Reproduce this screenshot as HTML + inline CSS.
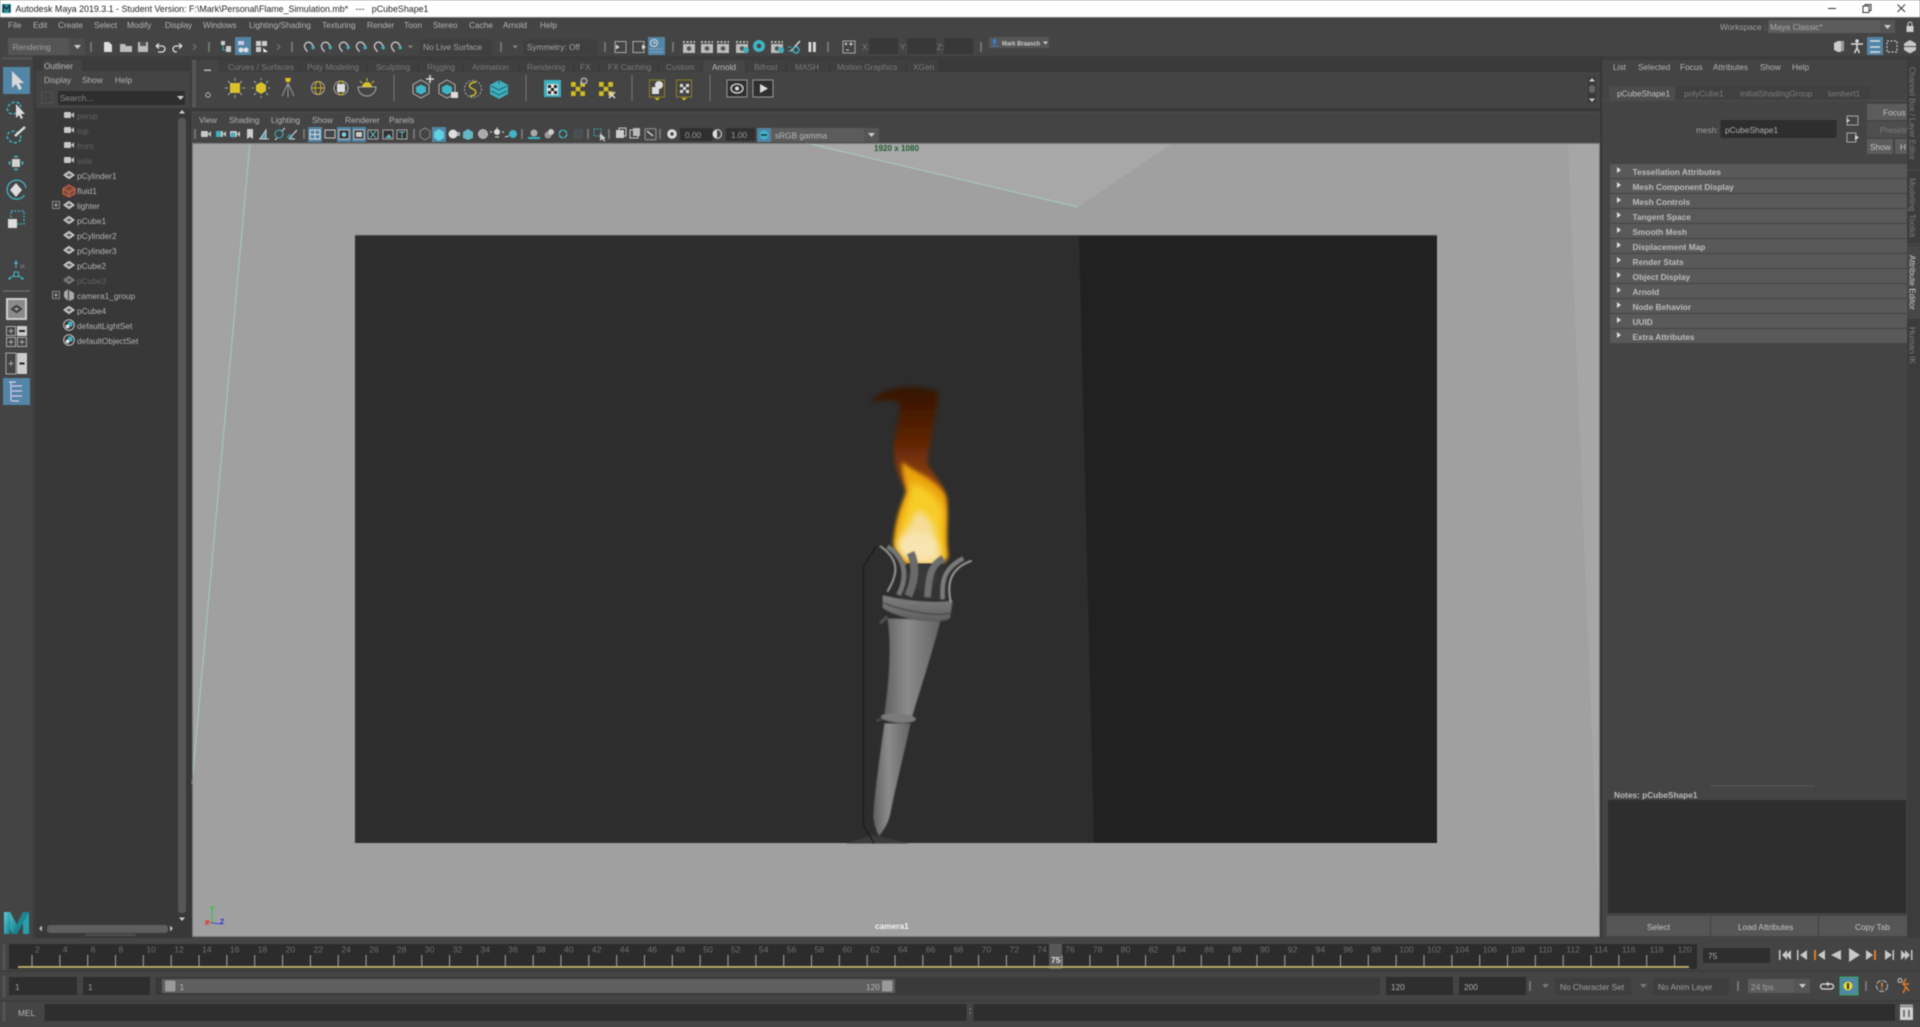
<!DOCTYPE html>
<html><head><meta charset="utf-8"><title>Autodesk Maya 2019.3.1</title>
<style>
html,body{margin:0;padding:0;background:#444;width:1920px;height:1027px;overflow:hidden}
svg{display:block;filter:blur(.45px)}
text{font-family:"Liberation Sans",sans-serif;font-size:8.3px;fill:#b4b4b4}
.d{fill:#7c7c7c}.dd{fill:#626262}.b{font-weight:bold;fill:#bcbcbc}.w{fill:#e4e4e4}
.k{font-size:8.6px;fill:#6f6f6f}
.v{font-size:8.4px;fill:#8a8a8a}
</style></head><body>
<svg xmlns="http://www.w3.org/2000/svg" width="1920" height="1027" viewBox="0 0 1920 1027">
<defs>
<g id="cam"><rect x="-5" y="-3" width="7" height="6" rx="1" fill="#c8c8c8"/><path d="M2 0L5-3V3Z" fill="#c8c8c8"/></g>
<g id="obj"><path d="M-6 0L-3-2.2L0-4.2L3-2.2L6 0L3 2.2L0 4.2L-3 2.2Z" fill="#c4c4c4"/><path d="M-2.5 0H2.5M0-2V2" stroke="#444" stroke-width=".9"/></g>
<g id="set"><circle r="5.3" fill="#333" stroke="#c4c4c4"/><rect x="-1" y="-3.5" width="4.5" height="5" fill="#3fb0bf"/><circle cx="-1.5" cy="1.5" r="2" fill="#ddd"/></g>
<g id="plus"><rect x="-3.5" y="-3.5" width="7" height="7" fill="none" stroke="#8a8a8a"/><path d="M-2 0H2M0-2V2" stroke="#aaa"/></g>
<g id="pane"><rect x="-4.5" y="-4.5" width="9" height="9" fill="none" stroke="#aaa"/><path d="M-2.500 0H2.500M0-2.500V2.500" stroke="#aaa"/></g>
<g id="mag"><path d="M-4 3V-1A4 4 0 0 1 4-1V3" fill="none" stroke="#c8c8c8" stroke-width="1.400"/><rect x="1.500" y="1.500" width="3" height="3" fill="#3fb0bf"/></g>
<g id="clap"><rect x="-6" y="-3" width="12" height="9" fill="#bdbdbd"/><path d="M-6-5H6" stroke="#bdbdbd" stroke-dasharray="2 1.5" stroke-width="2"/><circle cy="1.5" r="2.3" fill="#555"/></g>
<g id="vb"><rect x="-6" y="-6" width="12" height="12" rx="1" fill="none" stroke="#9a9a9a" stroke-width="1.1"/></g>
<g id="bar"><rect x="-.8" y="-5" width="1.6" height="10" fill="#7d7d7d"/></g>
<g id="hex"><path d="M0-9L8-4.5V4.5L0 9L-8 4.5V-4.5Z" fill="none" stroke="#b4b4b4"/><path d="M0-4.5L5-2V3L0 5.5L-5 3V-2Z" fill="#3fb5c6"/></g>
<g id="chk"><path d="M-7-7h4.7v4.7H-7zM2.300-7H7v4.700H2.300zM-2.300-2.300H2.300V2.300H-2.300zM-7 2.300h4.700V7H-7zM2.300 2.300H7V7H2.300z" fill="#d0bd1e"/></g>
<g id="bulb"><circle r="6.500" fill="none" stroke="#aaa"/><ellipse rx="3" ry="6.500" fill="none" stroke="#c9b21f"/><path d="M-6.500 0H6.500" stroke="#c9b21f"/></g>
<filter id="b2" x="-30%" y="-30%" width="160%" height="160%"><feGaussianBlur stdDeviation="6"/></filter>
<filter id="b3" x="-30%" y="-30%" width="160%" height="160%"><feGaussianBlur stdDeviation="10"/></filter>
<filter id="b1" x="-20%" y="-20%" width="140%" height="140%"><feGaussianBlur stdDeviation="1.500"/></filter>
<linearGradient id="fl" x1="0" y1="0" x2="0" y2="1"><stop offset="0" stop-color="#331204"/><stop offset=".3" stop-color="#5e2406"/><stop offset=".55" stop-color="#94460a"/><stop offset=".7" stop-color="#e08a0e"/><stop offset="1" stop-color="#f0a612"/></linearGradient>
<linearGradient id="h1" x1="0" y1="0" x2="1" y2="0"><stop offset="0" stop-color="#606060"/><stop offset=".4" stop-color="#8c8c8c"/><stop offset="1" stop-color="#636363"/></linearGradient>
<linearGradient id="h2" x1="0" y1="0" x2="0" y2="1"><stop offset="0" stop-color="#808080"/><stop offset="1" stop-color="#606060"/></linearGradient>
<linearGradient id="mlogo" x1="0" y1="0" x2="1" y2="1"><stop offset="0" stop-color="#5fd0dc"/><stop offset="1" stop-color="#157f8c"/></linearGradient>
</defs>

<!-- base -->
<rect width="1920" height="1027" fill="#444"/>
<!-- title bar -->
<rect width="1920" height="17" fill="#fff"/>
<rect y="16.500" width="1920" height="1" fill="#ccc"/>
<rect x="2" y="4" width="9" height="9" fill="#2d8d96"/><path d="M3.500 12V5.500L6.500 9L9.500 5.500V12" fill="none" stroke="#123" stroke-width="1"/>
<text x="15.500" y="12" style="font-size:9.200px;fill:#222" textLength="413" lengthAdjust="spacingAndGlyphs" xml:space="preserve">Autodesk Maya 2019.3.1 - Student Version: F:\Mark\Personal\Flame_Simulation.mb*   ---   pCubeShape1</text>
<path d="M1828 8.500H1836" stroke="#333"/><rect x="1863" y="6" width="6" height="6.500" fill="none" stroke="#333"/><path d="M1865 6V4.500H1871V10.500H1869" fill="none" stroke="#333"/><path d="M1897.500 4.500L1905 12M1905 4.500L1897.500 12" stroke="#333"/>

<!-- menu -->
<text x="8" y="28">File</text><text x="33" y="28">Edit</text><text x="58" y="28">Create</text><text x="94" y="28">Select</text><text x="127" y="28">Modify</text><text x="165" y="28">Display</text><text x="203" y="28">Windows</text><text x="249" y="28">Lighting/Shading</text><text x="322" y="28">Texturing</text><text x="367" y="28">Render</text><text x="404" y="28">Toon</text><text x="433" y="28">Stereo</text><text x="469" y="28">Cache</text><text x="503" y="28">Arnold</text><text x="540" y="28">Help</text>

<text x="1720" y="30" class="v" style="fill:#a0a0a0">Workspace :</text>
<rect x="1768" y="20" width="127" height="13" fill="#5c5c5c"/><rect x="1880" y="20" width="15" height="13" fill="#555"/>
<text x="1770" y="30" style="fill:#acacac">Maya Classic*</text><path d="M1884 25H1891L1887.500 29Z" fill="#ccc"/>
<rect x="1906.500" y="26" width="7" height="6" fill="#d0d0d0"/><path d="M1908 26V24A2 2 0 0 1 1912 24V26" fill="none" stroke="#d0d0d0"/>

<!-- status line -->
<rect x="8" y="38" width="77" height="17" fill="#555"/><rect x="69" y="38" width="16" height="17" fill="#4c4c4c"/>
<text x="12.500" y="50" style="fill:#a0a0a0">Rendering</text><path d="M74 45H81L77.500 49Z" fill="#ccc"/>
<use href="#bar" x="91" y="47"/>
<path d="M104 42H109L112 45V52H104Z" fill="#ddd"/>
<path d="M120 44H125L126 46H132V52H120Z" fill="#bdbdbd"/>
<rect x="138" y="42" width="10" height="10" fill="#bbb"/><rect x="140" y="42" width="6" height="4" fill="#555"/>
<path d="M156 46H162A3 3 0 0 1 162 52H158M156 46L159 43.500M156 46L159 48.500" fill="none" stroke="#ddd" stroke-width="1.300"/>
<path d="M182 46H176A3 3 0 0 0 176 52H177M182 46L179 43.500M182 46L179 48.500" fill="none" stroke="#ddd" stroke-width="1.300"/>
<path d="M193 44L196 47L193 50" fill="none" stroke="#777"/><use href="#bar" x="209" y="47"/>
<path d="M221 41h4v4h-4zM226 46h5v6h-5z" fill="#ccc"/><path d="M223 45V50H226" stroke="#3fb0bf" fill="none"/>
<rect x="235" y="37" width="16" height="18" fill="#5285a6"/><path d="M238 41h6v4h-6z" fill="#ccd"/><circle cx="241" cy="50" r="2.500" fill="#ddd"/><circle cx="246" cy="50" r="2.500" fill="#ddd"/>
<path d="M256 41h5v5h-5zM262 41h5v5h-5zM256 47h5v5h-5z" fill="#ccc"/><path d="M263 48L268 52H264V54Z" fill="#fff"/>
<path d="M277 44L280 47L277 50" fill="none" stroke="#777"/><use href="#bar" x="292" y="47"/>
<use href="#mag" x="309" y="47" transform="rotate(-35 309 47)"/><use href="#mag" x="326" y="47" transform="rotate(-35 326 47)"/><use href="#mag" x="344" y="47" transform="rotate(-35 344 47)"/><use href="#mag" x="361" y="47" transform="rotate(-35 361 47)"/><use href="#mag" x="379" y="47" transform="rotate(-35 379 47)"/><use href="#mag" x="396" y="47" transform="rotate(-35 396 47)"/>
<path d="M408 45.500H413L410.500 48.500Z" fill="#888"/>
<rect x="420" y="39" width="72" height="16" fill="#3f3f3f"/><text x="423" y="50" style="fill:#a4a4a4">No Live Surface</text>
<use href="#bar" x="501" y="47"/><path d="M512.500 45.500H518L515.200 48.500Z" fill="#888"/>
<rect x="523" y="39" width="74" height="16" fill="#3f3f3f"/><text x="527" y="50" style="fill:#a4a4a4">Symmetry: Off</text>
<use href="#bar" x="605" y="47"/>
<rect x="615" y="41.500" width="11" height="11" fill="none" stroke="#aaa"/><path d="M616 44.500L619.500 47L616 49.500Z" fill="#ddd"/>
<rect x="633" y="41.500" width="11" height="11" fill="none" stroke="#aaa"/><path d="M642 44.500L646 47L642 49.500Z" fill="#ddd"/>
<rect x="648" y="37" width="17" height="18" fill="#5285a6"/><circle cx="654" cy="43" r="3.500" fill="none" stroke="#ddd"/><path d="M654 41V43H656" stroke="#ddd" fill="none"/><path d="M650 49h13M650 52h13" stroke="#8fb4cc" stroke-dasharray="2 1"/>
<use href="#bar" x="673" y="47"/>
<use href="#clap" x="689" y="47"/><use href="#clap" x="707" y="47"/><use href="#clap" x="723" y="47"/>
<use href="#clap" x="742" y="47"/><circle cx="746" cy="50" r="3" fill="#3fb0bf"/>
<circle cx="759" cy="46" r="6" fill="#3fb5c6"/><circle cx="759" cy="46" r="2.300" fill="#444"/>
<use href="#clap" x="777" y="47"/><circle cx="781" cy="50" r="3" fill="#3fb0bf"/>
<path d="M791 51L800 41" stroke="#ddd" stroke-width="1.500"/><circle cx="796" cy="50" r="3" fill="none" stroke="#3fb0bf" stroke-width="1.500"/><path d="M788 47h3M788 51h3" stroke="#3fb0bf"/>
<rect x="808.500" y="42" width="2.800" height="10" fill="#ddd"/><rect x="813" y="42" width="2.800" height="10" fill="#ddd"/>
<use href="#bar" x="828" y="47"/>
<rect x="843" y="41" width="12" height="12" fill="none" stroke="#aaa"/><circle cx="846" cy="44" r="1.200" fill="#ccc"/><path d="M849 44h4M851 42v4M846 50h3" stroke="#ccc" fill="none"/>
<text x="862" y="50" class="d">X:</text><rect x="869" y="38" width="29" height="16" fill="#383838"/>
<text x="900" y="50" class="d">Y:</text><rect x="907" y="38" width="29" height="16" fill="#383838"/>
<text x="937" y="50" class="d">Z:</text><rect x="944" y="38" width="29" height="16" fill="#383838"/>
<use href="#bar" x="981" y="47"/>
<rect x="989" y="37" width="60" height="11" fill="#565656"/><rect x="993" y="39" width="3" height="5" fill="#3a7fd8"/><path d="M991 46h7" stroke="#3a7fd8"/><text x="1002" y="45.500" style="font-size:6.500px;font-weight:bold;fill:#ccc" textLength="38" lengthAdjust="spacingAndGlyphs">Mark Braasch</text><path d="M1043 41.500H1048L1045.500 44.500Z" fill="#ccc"/>

<path d="M1834 43l4-2h3v11h-3l-4-2z" fill="#ccc"/><path d="M1841 41h3v10h-3z" fill="#999"/>
<circle cx="1857" cy="41" r="1.800" fill="#ddd"/><path d="M1851 44H1863M1857 43V48L1854.500 53M1857 48L1859.500 53" stroke="#ddd" stroke-width="1.500" fill="none"/>
<rect x="1867" y="37" width="16" height="18" fill="#5285a6"/><path d="M1870 41h10M1870 47h10M1870 52h10" stroke="#ddd" stroke-width="1.600"/>
<rect x="1887" y="41" width="10" height="11" fill="none" stroke="#ddd" stroke-dasharray="2 1.500"/>
<path d="M1910 40L1916 43.500V50L1910 53.500L1904 50V43.500Z" fill="#c9c9c9"/><path d="M1904 46.500h12" stroke="#555"/>

<!-- dark divider under status -->
<rect y="56" width="1920" height="4" fill="#3c3c3c"/>

<!-- toolbox -->
<rect x="0" y="56" width="33" height="884" fill="#444"/>
<path d="M2 58.500H31" stroke="#666" stroke-dasharray="1 1" stroke-width="2"/>
<rect x="3" y="67" width="27" height="27" fill="#5285a6"/><path d="M12 71V88L16 84L19 90L22 88.500L19 83H24Z" fill="#d8d8d8"/>
<ellipse cx="14" cy="108" rx="7" ry="5.500" fill="none" stroke="#3fb5c6" stroke-width="1.500" stroke-dasharray="3 2" transform="rotate(-30 14 108)"/><path d="M16 104V118L19 115L21 119L23 118L21 114H25Z" fill="#ddd"/>
<ellipse cx="14" cy="137" rx="7" ry="5.500" fill="none" stroke="#3fb5c6" stroke-width="1.500" stroke-dasharray="3 2" transform="rotate(20 14 137)"/><path d="M15 136L25 127" stroke="#ddd" stroke-width="2.500"/>
<rect x="12" y="159" width="8" height="8" fill="#d0d0d0"/><path d="M16 155L13.500 157.500H18.500ZM16 171L13.500 168.500H18.500ZM8 163L10.500 160.500V165.500ZM24 163L21.500 160.500V165.500Z" fill="#3fb5c6"/>
<path d="M26 188A9.500 9.500 0 1 0 24.500 195" fill="none" stroke="#3fb5c6" stroke-width="1.300"/><path d="M16 183L22 190L16 197L10 190Z" fill="#ddd"/>
<rect x="11" y="211" width="13" height="13" fill="none" stroke="#3fb5c6" stroke-dasharray="2 1.500" stroke-width="1.200"/><rect x="8" y="219" width="9" height="9" fill="#ddd"/>
<path d="M16 268L16 262M9.500 279L14 275M22.500 279L18 275" stroke="#3fb5c6"/><rect x="14" y="272" width="4.500" height="4.500" fill="none" stroke="#3fb5c6"/><path d="M16 260L14 264H18ZM8 280L11 279L9.500 276.500ZM24 280L21 279L22.500 276.500Z" fill="#3fb5c6"/><text x="20" y="268" style="font-size:5.500px;fill:#999">st.</text>
<rect x="3" y="290.500" width="27" height="1" fill="#777"/>
<rect x="7" y="299" width="19" height="20" fill="#8a8a8a" stroke="#cfcfcf" stroke-width="2"/><use href="#obj" x="16.500" y="309" style="filter:invert(1)"/>
<use href="#pane" x="11" y="331"/><rect x="17" y="326" width="10" height="10" fill="#ccc"/><path d="M19 331H25" stroke="#222" stroke-width="2"/><use href="#pane" x="11" y="342"/><use href="#pane" x="22" y="342"/>
<rect x="6" y="353" width="10" height="21" fill="#444" stroke="#aaa"/><path d="M8.500 363.500H13.500M11 361V366" stroke="#aaa"/><rect x="17" y="353" width="10" height="21" fill="#ccc"/><path d="M19.500 363.500H24.500" stroke="#222" stroke-width="2"/>
<rect x="3" y="378" width="27" height="27" fill="#5285a6"/><path d="M9 382h7M12 386h10M12 391h10M12 396h10M12 401h7M11 382V401" stroke="#dce" stroke-width="1.200" fill="none"/>
<path d="M4 912H10L17 925L17 934H12L5 918Z" fill="url(#mlogo)"/><rect x="4" y="912" width="6" height="22" fill="url(#mlogo)"/><rect x="23" y="912" width="6" height="22" fill="#27a0ad"/><path d="M23 912H29L17 934H12Z" fill="#1c8593"/>

<!-- outliner -->
<rect x="33" y="60" width="159" height="880" fill="#3b3b3b"/>
<rect x="43" y="60" width="39" height="11" fill="#444"/><text x="44" y="69" style="fill:#bcbcbc">Outliner</text>
<rect x="36" y="71" width="154" height="37" fill="#444"/>
<text x="44" y="83">Display</text><text x="82" y="83">Show</text><text x="115" y="83">Help</text>
<rect x="41.500" y="92" width="11" height="11" fill="none" stroke="#5c5c5c" stroke-dasharray="2 2"/>
<rect x="58" y="91" width="127" height="14" fill="#2e2e2e"/><text x="60" y="101" style="fill:#8a8a8a">Search...</text><path d="M177 96H184L180.500 100Z" fill="#ccc"/>
<rect x="36" y="108" width="154" height="832" fill="#383838"/>
<use href="#cam" x="69" y="115"/><text x="77" y="119" class="dd">persp</text>
<use href="#cam" x="69" y="130"/><text x="77" y="134" class="dd">top</text>
<use href="#cam" x="69" y="145"/><text x="77" y="149" class="dd">front</text>
<use href="#cam" x="69" y="160"/><text x="77" y="164" class="dd">side</text>
<use href="#obj" x="69" y="175"/><text x="77" y="179">pCylinder1</text>
<path d="M69 185L75 188.500V194L69 197L63 194V188.500Z" fill="#7b4a3c" stroke="#d8664c"/><path d="M63 188.500L69 192L75 188.500M69 192V197" stroke="#d8664c" fill="none"/><text x="77" y="194">fluid1</text>
<use href="#plus" x="56" y="205"/><use href="#obj" x="69" y="205"/><text x="77" y="209">lighter</text>
<use href="#obj" x="69" y="220"/><text x="77" y="224">pCube1</text>
<use href="#obj" x="69" y="235"/><text x="77" y="239">pCylinder2</text>
<use href="#obj" x="69" y="250"/><text x="77" y="254">pCylinder3</text>
<use href="#obj" x="69" y="265"/><text x="77" y="269">pCube2</text>
<use href="#obj" x="69" y="280" opacity=".5"/><text x="77" y="284" class="dd">pCube3</text>
<use href="#plus" x="56" y="295"/><path d="M64 297V292L68 289V301ZM69 290L74 293V299L69 301Z" fill="#aaa"/><text x="77" y="299">camera1_group</text>
<use href="#obj" x="69" y="310"/><text x="77" y="314">pCube4</text>
<use href="#set" x="69" y="325"/><text x="77" y="329">defaultLightSet</text>
<use href="#set" x="69" y="340"/><text x="77" y="344">defaultObjectSet</text>
<!-- outliner scrollbars -->
<path d="M182 110L185 113.500H179Z" fill="#ccc"/><rect x="178" y="118" width="8" height="795" rx="3" fill="#565656"/><path d="M182 921L185 917.500H179Z" fill="#ccc"/>
<path d="M39 928.500L42 925.500V931.500Z" fill="#bbb"/><rect x="47" y="925" width="121" height="8" rx="3" fill="#5e5e5e"/><path d="M173 928.500L170 925.500V931.500Z" fill="#bbb"/>
<path d="M86 935H136" stroke="#666" stroke-dasharray="1 1" stroke-width="2"/>

<!-- shelf -->
<path d="M194 60V107" stroke="#666" stroke-width="4" stroke-dasharray="1 1"/>
<rect x="199" y="60" width="1401" height="48" fill="#444"/>
<rect x="204" y="69.500" width="7" height="1.500" fill="#bbb"/><circle cx="208" cy="95" r="2.200" fill="none" stroke="#bbb"/>
<rect x="218" y="60" width="1382" height="12" fill="#393939"/>
<rect x="218" y="60" width="82" height="12" fill="#3f3f3f"/><rect x="301" y="60" width="66" height="12" fill="#3f3f3f"/><rect x="368" y="60" width="50" height="12" fill="#3f3f3f"/><rect x="419" y="60" width="44" height="12" fill="#3f3f3f"/><rect x="464" y="60" width="55" height="12" fill="#3f3f3f"/><rect x="520" y="60" width="53" height="12" fill="#3f3f3f"/><rect x="574" y="60" width="25" height="12" fill="#3f3f3f"/><rect x="600" y="60" width="58" height="12" fill="#3f3f3f"/><rect x="659" y="60" width="43" height="12" fill="#3f3f3f"/><rect x="703" y="60" width="42" height="12" fill="#464646"/><rect x="746" y="60" width="40" height="12" fill="#3f3f3f"/><rect x="787" y="60" width="42" height="12" fill="#3f3f3f"/><rect x="830" y="60" width="76" height="12" fill="#3f3f3f"/><rect x="907" y="60" width="31" height="12" fill="#3f3f3f"/>
<text x="228" y="70" class="d">Curves / Surfaces</text><text x="307" y="70" class="d">Poly Modeling</text><text x="376" y="70" class="d">Sculpting</text><text x="427" y="70" class="d">Rigging</text><text x="472" y="70" class="d">Animation</text><text x="527" y="70" class="d">Rendering</text><text x="580" y="70" class="d">FX</text><text x="608" y="70" class="d">FX Caching</text><text x="666" y="70" class="d">Custom</text><text x="712" y="70" class="b" style="font-weight:normal">Arnold</text><text x="754" y="70" class="d">Bifrost</text><text x="795" y="70" class="d">MASH</text><text x="837" y="70" class="d">Motion Graphics</text><text x="913" y="70" class="d">XGen</text>

<rect x="230" y="83" width="10" height="10" fill="#d8c22c"/><path d="M235 78v3M235 95v3M225 88h3M242 88h3M228 81l2 2M240 93l2 2M242 81l-2 2M230 93l-2 2" stroke="#aaa"/>
<path d="M261 82L266 85V91L261 94L256 91V85Z" fill="#d8c22c"/><path d="M261 78v2M261 96v2M252 88h2M268 88h2M254 81l2 2M266 93l2 2M268 81l-2 2M256 93l-2 2" stroke="#aaa"/>
<path d="M285 78h6l-1 4h-4z" fill="#d8c22c"/><path d="M288 83L282 96M288 83L294 96M288 83V97" stroke="#999" fill="none"/>
<use href="#bulb" x="318" y="88"/><circle cx="341" cy="88" r="7" fill="none" stroke="#aaa"/><ellipse cx="341" cy="88" rx="3" ry="7" fill="none" stroke="#c9b21f"/><rect x="337" y="84" width="8" height="8" fill="#ddd"/>
<path d="M358 87A9 9 0 0 0 376 87Z" fill="none" stroke="#aaa"/><path d="M362 87A5 5 0 0 1 372 87Z" fill="#d8c22c"/><path d="M367 78v3M360 81l2 2M374 81l-2 2" stroke="#d8c22c"/>
<rect x="393.500" y="75" width="1" height="26" fill="#777"/>
<use href="#hex" x="421" y="89"/><path d="M426 79h8M430 75v8" stroke="#ddd" stroke-width="1.500"/>
<use href="#hex" x="447" y="89"/><rect x="451" y="92" width="7" height="6" fill="#ddd"/>
<circle cx="473" cy="89" r="8.500" fill="none" stroke="#aaa" stroke-dasharray="2 1.500"/><path d="M476 82C468 83 468 87 473 89C478 91 476 96 470 96" fill="none" stroke="#d8c22c" stroke-width="1.400"/>
<path d="M499 80L508 85V94L499 99L490 94V85Z" fill="#3fb0bf"/><path d="M491 86L499 90L507 86M491 91L499 95L507 91M499 80V84" stroke="#1d6570" fill="none"/>
<rect x="525.500" y="75" width="1" height="26" fill="#777"/>
<rect x="544" y="80" width="17" height="17" fill="#3fb0bf"/><rect x="547" y="84" width="11" height="11" fill="#e6e6e6"/><path d="M548 85h3v3h-3zM554 85h3v3h-3zM551 88h3v3h-3zM548 91h3v3h-3zM554 91h3v3h-3z" fill="#222"/>
<use href="#chk" x="578" y="89"/><circle cx="584" cy="81" r="3" fill="#555" stroke="#ccc"/>
<use href="#chk" x="606" y="89"/><path d="M609 92L615 98M615 92L609 98" stroke="#ddd" stroke-width="1.500"/>
<rect x="631.500" y="75" width="1" height="26" fill="#777"/>
<rect x="649.500" y="80" width="15" height="17" fill="none" stroke="#8f7f22"/><rect x="652" y="87" width="7" height="7" fill="#ddd"/><circle cx="659" cy="85" r="4" fill="#ddd"/><path d="M654.500 98H660L657 100.500Z" fill="#d7c41c"/>
<rect x="676.500" y="80" width="15" height="17" fill="none" stroke="#8f7f22"/><path d="M680 84h3v3h-3zM686 84h3v3h-3zM683 87h3v3h-3zM680 90h3v3h-3zM686 90h3v3h-3z" fill="#ddd"/><path d="M681.500 98H687L684 100.500Z" fill="#d7c41c"/>
<rect x="709.500" y="75" width="1" height="26" fill="#777"/>
<rect x="727" y="80" width="20" height="17" fill="#2f2f2f" stroke="#999"/><ellipse cx="737" cy="88.500" rx="6" ry="4.500" fill="none" stroke="#ddd" stroke-width="1.300"/><circle cx="737" cy="88.500" r="2" fill="#ddd"/>
<rect x="753" y="80" width="20" height="17" fill="#2f2f2f" stroke="#999"/><path d="M760 84V93L768 88.500Z" fill="#ddd"/>
<rect x="1588" y="77" width="8" height="26" fill="#393939"/><path d="M1592 78L1595 81.500H1589ZM1592 102L1595 98.500H1589Z" fill="#ccc"/><rect x="1589" y="85" width="6" height="8" rx="3" fill="#666"/>
<rect y="108" x="192" width="1410" height="4" fill="#3a3a3a"/>

<!-- model panel -->
<rect x="190" y="112" width="2" height="828" fill="#353535"/>
<rect x="192" y="112" width="1408" height="31" fill="#444" stroke="#555" stroke-width=".6"/>
<text x="199" y="123">View</text><text x="229" y="123">Shading</text><text x="271" y="123">Lighting</text><text x="312" y="123">Show</text><text x="345" y="123">Renderer</text><text x="389" y="123">Panels</text>
<use href="#bar" x="195" y="134"/>
<use href="#cam" x="206" y="134"/><use href="#cam" x="221" y="134"/><rect x="216" y="131" width="5" height="6" fill="#3fb0bf"/><use href="#cam" x="235" y="134"/><circle cx="233" cy="135" r="2.500" fill="#3fb0bf"/>
<path d="M247 129h6v10l-3-2l-3 2z" fill="#ccc"/>
<path d="M260 139L266 130V139ZM259 139H269" fill="#4aa5b5" stroke="#ccc"/><circle cx="279" cy="134" r="4" fill="none" stroke="#3fb5c6"/><path d="M282 131l3-3M277 138l-2 2" stroke="#ddd"/><path d="M289 139L297 130M289 139h6" stroke="#ccc" stroke-width="1.300"/><circle cx="290" cy="137" r="2" fill="none" stroke="#3fb5c6"/>
<use href="#bar" x="304" y="134"/>
<rect x="308" y="127" width="14" height="15" fill="#5285a6"/><rect x="310" y="130" width="10" height="9" fill="none" stroke="#ddd"/><path d="M315 130v9M310 134.500h10" stroke="#ddd"/>
<rect x="325" y="130" width="10" height="8" fill="none" stroke="#ccc"/>
<rect x="337" y="127" width="14" height="15" fill="#5285a6"/><rect x="339" y="130" width="10" height="9" fill="#333" stroke="#bbb"/><circle cx="344" cy="134.500" r="2.300" fill="#7cd0e0"/>
<rect x="352" y="127" width="14" height="15" fill="#5285a6"/><rect x="354" y="130" width="10" height="9" fill="#333" stroke="#bbb"/><rect x="356" y="132" width="6" height="5" fill="#ccc"/>
<rect x="368" y="130" width="10" height="9" fill="#333" stroke="#aaa"/><path d="M370 131l6 7M376 131l-6 7" stroke="#5fb8c6"/>
<rect x="383" y="130" width="10" height="9" fill="#333" stroke="#aaa"/><path d="M385 138l4-4l3 4" fill="#5fb8c6"/>
<rect x="397" y="130" width="10" height="9" fill="#333" stroke="#aaa"/><path d="M399 132h6M402 132v6" stroke="#5fb8c6"/>
<use href="#bar" x="414" y="134"/>
<path d="M425 128L430 131V137L425 140L420 137V131Z" fill="none" stroke="#888"/>
<rect x="432" y="127" width="14" height="15" fill="#5285a6"/><path d="M439 129L444 132V138L439 141L434 138V132Z" fill="#5fd2e3"/>
<circle cx="453" cy="134" r="4.500" fill="#ddd"/><path d="M457 132h3v4h-3z" fill="#aaa"/>
<path d="M468 129L473 132V138L468 140L463 138V132Z" fill="#64b8c6"/>
<circle cx="483" cy="134" r="4.500" fill="#aaa" stroke="#ddd" stroke-dasharray="1.500 1"/>
<circle cx="497" cy="132" r="3" fill="#ddd"/><path d="M497 129v-1.500M492 132h-2M502 132h2M495 137h4" stroke="#ddd"/>
<circle cx="513" cy="134" r="4" fill="#3fb5c6"/><path d="M505 137l4-1" stroke="#ddd"/>
<use href="#bar" x="522" y="134"/>
<circle cx="534" cy="133" r="3.500" fill="#aaa"/><path d="M528 138H540" stroke="#3fb5c6" stroke-width="2"/>
<circle cx="548" cy="135" r="3.500" fill="#999"/><circle cx="551" cy="132" r="3" fill="#ccc"/>
<circle cx="563" cy="134" r="3.800" fill="none" stroke="#3fb5c6" stroke-width="1.500" stroke-dasharray="5 1"/>
<rect x="573" y="129" width="10" height="10" fill="#4a5052"/>
<use href="#bar" x="588" y="134"/>
<rect x="594" y="129" width="7" height="7" fill="none" stroke="#3fa0b0" stroke-dasharray="2 1"/><path d="M600 133V141L602 139L604 141.500H605L604 138.500H606Z" fill="#ccc"/>
<use href="#bar" x="609" y="134"/>
<rect x="616" y="130" width="8" height="8" fill="#ccc"/><rect x="619" y="128" width="7" height="8" fill="none" stroke="#ccc"/>
<rect x="630" y="130" width="8" height="8" fill="none" stroke="#ccc"/><rect x="633" y="128" width="7" height="8" fill="#bbb"/>
<use href="#vb" x="650" y="134" transform="translate(59 12.300) scale(.91)"/><path d="M647 131l6 5" stroke="#ddd" stroke-width="1.300"/>
<use href="#bar" x="660" y="134"/>
<circle cx="672" cy="134" r="4.800" fill="#ddd"/><circle cx="672" cy="134" r="1.700" fill="#444"/>
<rect x="680" y="128" width="33" height="13" fill="#2f2f2f"/><text x="685" y="138" style="fill:#999">0.00</text>
<path d="M717 129.500A4.500 4.500 0 0 0 717 138.500Z" fill="#ddd"/><path d="M717 129.500A4.500 4.500 0 0 1 717 138.500" fill="none" stroke="#ddd"/>
<rect x="726" y="128" width="29" height="13" fill="#2f2f2f"/><text x="731" y="138" style="fill:#999">1.00</text>
<rect x="757" y="128" width="14" height="14" fill="#5285a6"/><circle cx="764" cy="135" r="4.500" fill="#3fb5c6"/><path d="M761 135h6" stroke="#134" stroke-width="1.500"/>
<rect x="771" y="128" width="108" height="14" fill="#5c5c5c"/><rect x="864" y="128" width="15" height="14" fill="#555"/>
<text x="775" y="138.500" style="fill:#bcbcbc">sRGB gamma</text><path d="M868 133H875L871.500 137Z" fill="#ccc"/>

<!-- viewport -->
<rect x="192" y="143" width="1408" height="794" fill="#a0a0a0"/>
<path d="M192 143H250L192 784Z" fill="#a3a3a3"/>
<path d="M806 143L1078 207L1173 143Z" fill="#a8a8a8"/>
<path d="M1568 143H1600V937H1600L1568 143Z" fill="#a6a6a6"/>
<path d="M250 143L192 784" stroke="#a5cbbc" stroke-width="1"/>
<path d="M806 143L1078 207" stroke="#a9cdc0" stroke-width="1"/>
<rect x="192.500" y="143.500" width="1407" height="793" fill="none" stroke="#7c7c7c"/>
<text x="874" y="151" style="font-size:8px;font-weight:bold;fill:#1f5a30" textLength="45" lengthAdjust="spacingAndGlyphs">1920 x 1080</text>
<!-- gate -->
<rect x="355" y="235" width="1082" height="608" fill="#2d2d2d"/>
<path d="M1079 235H1437V843H1094Z" fill="#212121"/>
<rect x="355" y="235" width="1082" height="1" fill="#4a4a4a"/>

<!-- torch -->
<g transform="translate(800 360) scale(.33333)">
<path d="M135 1450L220 1425L330 1450Z" fill="#3a3a3a" filter="url(#b1)"/>
<path d="M228 560L190 620V1395L222 1450" fill="none" stroke="#161616" stroke-width="3"/>
<path d="M190 620V1395" stroke="#1a1a1a" stroke-width="9" opacity=".6" filter="url(#b1)"/>
<!-- flame -->
<g filter="url(#b2)">
<path d="M212 124C250 85 320 66 415 95C410 170 388 250 382 310C395 340 432 370 440 420C442 490 432 540 442 590C430 610 400 620 340 620C300 610 285 580 283 545C288 480 306 430 322 395C298 350 273 300 283 240C293 190 303 150 298 128C270 118 245 120 212 124Z" fill="url(#fl)"/>
</g>
<g filter="url(#b2)"><path d="M306 305C345 340 412 355 436 410C442 480 432 540 442 590C410 625 320 620 286 560C288 470 316 420 322 395C312 360 306 335 306 305Z" fill="#eba310"/></g>
<g filter="url(#b3)"><path d="M335 365C385 385 432 420 430 470C425 530 432 570 428 590C390 610 315 610 292 555C297 490 322 440 335 365Z" fill="#f7cc28"/></g>
<g filter="url(#b3)"><path d="M350 450C390 465 410 500 405 545C420 570 430 590 425 605C380 625 320 615 298 550C310 510 335 495 350 450Z" fill="#f6dd96"/></g>
<g filter="url(#b3)"><ellipse cx="355" cy="560" rx="58" ry="42" fill="#f8e4b0"/></g>
<!-- crown -->
<path d="M320 610L430 610L440 720L300 715Z" fill="#333"/>
<ellipse cx="368" cy="650" rx="45" ry="40" fill="#383838"/>
<path d="M240 790L262 770" stroke="#4a4a4a" stroke-width="11"/>
<path d="M228 1082L252 1076" stroke="#444" stroke-width="8"/>
<g filter="url(#b1)">
<path d="M262 775C276 860 265 980 253 1062L337 1068C370 960 402 860 422 780Z" fill="url(#h1)"/>
<path d="M253 1090C238 1200 223 1300 220 1370C222 1395 232 1420 237 1428C252 1410 264 1390 270 1365C287 1280 312 1180 332 1090Z" fill="url(#h1)"/>
<ellipse cx="295" cy="1074" rx="53" ry="14" fill="#7a7a7a" transform="rotate(4 295 1074)"/>
<path d="M248 705C300 720 400 730 458 722L450 775Q350 800 248 745Z" fill="url(#h2)"/>
<path d="M250 728C300 750 400 770 450 760" stroke="#3a3a3a" stroke-width="3" fill="none"/>
<path d="M258 750C310 778 400 790 445 778" stroke="#5a5a5a" stroke-width="3" fill="none"/>
<path d="M295 705C325 650 315 590 262 560" stroke="#757575" stroke-width="15" fill="none"/>
<path d="M262 695C295 640 300 600 240 558" stroke="#b0b0b0" stroke-width="5" fill="none"/>
<path d="M325 708C345 660 350 620 332 578" stroke="#6a6a6a" stroke-width="24" fill="none"/>
<path d="M382 712C388 660 385 620 430 595" stroke="#6e6e6e" stroke-width="21" fill="none"/>
<path d="M428 718C425 665 430 625 490 595" stroke="#7c7c7c" stroke-width="14" fill="none"/>
<path d="M452 725C440 670 450 625 515 602" stroke="#b8b8b8" stroke-width="5" fill="none"/>
</g>
</g>

<!-- axis -->
<path d="M212 923V908" stroke="#2fc24a"/><path d="M212 923L207 921" stroke="#e03a3a"/><path d="M212 923L222 924" stroke="#3a4ae0"/>
<text x="210" y="911" style="font-size:7px;font-weight:bold;fill:#1fc83a">Y</text><text x="204.500" y="925" style="font-size:7px;font-weight:bold;fill:#e02a2a">X</text><text x="220" y="924" style="font-size:7px;font-weight:bold;fill:#2a2ae0">Z</text>
<text x="875" y="929" style="font-weight:bold;fill:#f4f4f4">camera1</text>

<!-- attribute editor -->
<rect x="1600" y="56" width="2" height="884" fill="#363636"/>
<text x="1613" y="70">List</text><text x="1638" y="70">Selected</text><text x="1680" y="70">Focus</text><text x="1713" y="70">Attributes</text><text x="1760" y="70">Show</text><text x="1792" y="70">Help</text>
<rect x="1602" y="100" width="305" height="1" fill="#4e4e4e"/>
<rect x="1609" y="86" width="66" height="14" fill="#4c4c4c"/><rect x="1676" y="86" width="55" height="14" fill="#404040"/><rect x="1732" y="86" width="87" height="14" fill="#404040"/><rect x="1820" y="86" width="50" height="14" fill="#404040"/>
<text x="1617" y="96.500" style="fill:#c4c4c4">pCubeShape1</text><text x="1684" y="96.500" class="d">polyCube1</text><text x="1740" y="96.500" class="d">initialShadingGroup</text><text x="1828" y="96.500" class="d">lambert1</text>
<text x="1696" y="133" style="fill:#a0a0a0">mesh:</text>
<rect x="1720.500" y="120" width="116" height="18" fill="#2e2e2e"/><text x="1725" y="133" style="fill:#b0b0b0">pCubeShape1</text>
<rect x="1847" y="116" width="11" height="9" fill="none" stroke="#aaa"/><path d="M1847 118.500L1850 120.500L1847 122.500Z" fill="#ddd"/>
<rect x="1847" y="133" width="9" height="9" fill="none" stroke="#aaa"/><path d="M1855 135L1859 137.500L1855 140Z" fill="#ddd"/>
<rect x="1867" y="104" width="40" height="16" fill="#5c5c5c"/><text x="1883" y="115.500" style="fill:#c4c4c4">Focus</text>
<rect x="1867" y="121.500" width="40" height="16" fill="#4e4e4e"/><text x="1880" y="133" class="d">Presets</text>
<rect x="1867" y="139" width="26" height="15" fill="#5c5c5c"/><text x="1870" y="150" style="fill:#c4c4c4">Show</text>
<rect x="1895" y="139" width="12" height="15" fill="#5c5c5c"/><text x="1900" y="150" style="fill:#c4c4c4">H</text>
<!-- sections -->
<g fill="#595959">
<rect x="1610" y="164" width="297" height="14"/><rect x="1610" y="179" width="297" height="14"/><rect x="1610" y="194" width="297" height="14"/><rect x="1610" y="209" width="297" height="14"/><rect x="1610" y="224" width="297" height="14"/><rect x="1610" y="239" width="297" height="14"/><rect x="1610" y="254" width="297" height="14"/><rect x="1610" y="269" width="297" height="14"/><rect x="1610" y="284" width="297" height="14"/><rect x="1610" y="299" width="297" height="14"/><rect x="1610" y="314" width="297" height="14"/><rect x="1610" y="329" width="297" height="14"/>
</g>
<g fill="#e0e0e0"><path d="M1617 167L1621 170L1617 173Z"/><path d="M1617 182L1621 185L1617 188Z"/><path d="M1617 197L1621 200L1617 203Z"/><path d="M1617 212L1621 215L1617 218Z"/><path d="M1617 227L1621 230L1617 233Z"/><path d="M1617 242L1621 245L1617 248Z"/><path d="M1617 257L1621 260L1617 263Z"/><path d="M1617 272L1621 275L1617 278Z"/><path d="M1617 287L1621 290L1617 293Z"/><path d="M1617 302L1621 305L1617 308Z"/><path d="M1617 317L1621 320L1617 323Z"/><path d="M1617 332L1621 335L1617 338Z"/></g>
<text x="1632.500" y="175" class="b">Tessellation Attributes</text><text x="1632.500" y="190" class="b">Mesh Component Display</text><text x="1632.500" y="205" class="b">Mesh Controls</text><text x="1632.500" y="220" class="b">Tangent Space</text><text x="1632.500" y="235" class="b">Smooth Mesh</text><text x="1632.500" y="250" class="b">Displacement Map</text><text x="1632.500" y="265" class="b">Render Stats</text><text x="1632.500" y="280" class="b">Object Display</text><text x="1632.500" y="295" class="b">Arnold</text><text x="1632.500" y="310" class="b">Node Behavior</text><text x="1632.500" y="325" class="b">UUID</text><text x="1632.500" y="340" class="b">Extra Attributes</text>
<!-- notes -->
<path d="M1711 786H1815" stroke="#6a6a6a" stroke-dasharray="1 1"/>
<text x="1614" y="798" class="b">Notes:  pCubeShape1</text>
<rect x="1608" y="800" width="298" height="113" fill="#2e2e2e"/>
<rect x="1606.500" y="916" width="103.500" height="20" fill="#565656"/><rect x="1711" y="916" width="107" height="20" fill="#565656"/><rect x="1819" y="916" width="88" height="20" fill="#565656"/>
<text x="1647" y="930" style="fill:#c4c4c4">Select</text><text x="1738" y="930" style="fill:#c4c4c4">Load Attributes</text><text x="1855" y="930" style="fill:#c4c4c4">Copy Tab</text>
<!-- side tabs -->
<rect x="1907" y="56" width="13" height="884" fill="#3c3c3c"/>
<rect x="1907" y="246" width="13" height="72" fill="#474747"/>
<path d="M1907 170h13M1907 244h13M1907 318h13" stroke="#4c4c4c"/>
<text transform="translate(1909.500 67) rotate(90)" class="d" textLength="93" lengthAdjust="spacingAndGlyphs">Channel Box / Layer Editor</text>
<text transform="translate(1909.500 178) rotate(90)" class="d">Modeling Toolkit</text>
<text transform="translate(1909.500 255) rotate(90)" style="fill:#d0d0d0">Attribute Editor</text>
<text transform="translate(1909.500 327) rotate(90)" class="d">Human IK</text>

<!-- time slider -->
<rect x="0" y="938" width="1920" height="89" fill="#444"/>
<path d="M4 945V970M4 976V998M4 1002V1022" stroke="#626262" stroke-width="3" stroke-dasharray="1 1"/>
<rect x="9" y="944" width="1688" height="25" fill="#2c2c2c"/>
<rect x="1049" y="944" width="13" height="25" fill="#585858"/>
<line x1="31.500" y1="960.500" x2="1690" y2="960.500" stroke="#a6a6a6" stroke-width="11" stroke-dasharray="1 26.840"/>
<rect x="18" y="966" width="1671" height="2" fill="#b8a968"/>
<text x="1051" y="963" style="font-weight:bold;font-size:8.500px;fill:#e4e4e4">75</text>
<g class="tl">
<text class="k" x="35" y="952.500">2</text><text class="k" x="62.800" y="952.500">4</text><text class="k" x="90.700" y="952.500">6</text><text class="k" x="118.500" y="952.500">8</text><text class="k" x="146.400" y="952.500">10</text><text class="k" x="174.200" y="952.500">12</text><text class="k" x="202" y="952.500">14</text><text class="k" x="229.900" y="952.500">16</text><text class="k" x="257.700" y="952.500">18</text><text class="k" x="285.600" y="952.500">20</text><text class="k" x="313.400" y="952.500">22</text><text class="k" x="341.200" y="952.500">24</text><text class="k" x="369.100" y="952.500">26</text><text class="k" x="396.900" y="952.500">28</text><text class="k" x="424.800" y="952.500">30</text><text class="k" x="452.600" y="952.500">32</text><text class="k" x="480.400" y="952.500">34</text><text class="k" x="508.300" y="952.500">36</text><text class="k" x="536.100" y="952.500">38</text><text class="k" x="564" y="952.500">40</text><text class="k" x="591.800" y="952.500">42</text><text class="k" x="619.600" y="952.500">44</text><text class="k" x="647.500" y="952.500">46</text><text class="k" x="675.300" y="952.500">48</text><text class="k" x="703.200" y="952.500">50</text><text class="k" x="731" y="952.500">52</text><text class="k" x="758.800" y="952.500">54</text><text class="k" x="786.700" y="952.500">56</text><text class="k" x="814.500" y="952.500">58</text><text class="k" x="842.400" y="952.500">60</text><text class="k" x="870.200" y="952.500">62</text><text class="k" x="898" y="952.500">64</text><text class="k" x="925.900" y="952.500">66</text><text class="k" x="953.700" y="952.500">68</text><text class="k" x="981.600" y="952.500">70</text><text class="k" x="1009.400" y="952.500">72</text><text class="k" x="1037.200" y="952.500">74</text><text class="k" x="1065.100" y="952.500">76</text><text class="k" x="1092.900" y="952.500">78</text><text class="k" x="1120.800" y="952.500">80</text><text class="k" x="1148.600" y="952.500">82</text><text class="k" x="1176.400" y="952.500">84</text><text class="k" x="1204.300" y="952.500">86</text><text class="k" x="1232.100" y="952.500">88</text><text class="k" x="1260" y="952.500">90</text><text class="k" x="1287.800" y="952.500">92</text><text class="k" x="1315.600" y="952.500">94</text><text class="k" x="1343.500" y="952.500">96</text><text class="k" x="1371.300" y="952.500">98</text><text class="k" x="1399.200" y="952.500">100</text><text class="k" x="1427" y="952.500">102</text><text class="k" x="1454.800" y="952.500">104</text><text class="k" x="1482.700" y="952.500">106</text><text class="k" x="1510.500" y="952.500">108</text><text class="k" x="1538.400" y="952.500">110</text><text class="k" x="1566.200" y="952.500">112</text><text class="k" x="1594" y="952.500">114</text><text class="k" x="1621.900" y="952.500">116</text><text class="k" x="1649.700" y="952.500">118</text><text class="k" x="1677.600" y="952.500">120</text>
</g>
<rect x="1703" y="948" width="67" height="15" fill="#2e2e2e"/><text x="1708" y="959" style="fill:#acacac">75</text>
<g fill="#c8c8c8">
<path d="M1779 950v10h1.500v-10zM1787 950v10L1782 955ZM1791 950v10L1786 955Z"/>
<path d="M1797 950v10h1.500v-10zM1807 950v10L1800 955Z"/>
<path d="M1814 950v10h2v-10z" fill="#e07b28"/><path d="M1825 950v10L1818 955Z"/>
<path d="M1841 950v10L1831 955Z"/>
<path d="M1849 948v14L1860 955Z"/>
<path d="M1866 950v10L1873 955Z"/><path d="M1874 950v10h2v-10z" fill="#e07b28"/>
<path d="M1885 950v10L1892 955ZM1892.500 950v10h1.500v-10z"/>
<path d="M1901 950v10L1906 955ZM1905 950v10L1910 955ZM1911 950v10h1.500v-10z"/>
</g>

<!-- range row -->
<rect x="0" y="970" width="1920" height="2" fill="#3d3d3d"/>
<rect x="9" y="977" width="68" height="18" fill="#2e2e2e"/><rect x="83" y="977" width="67" height="18" fill="#2e2e2e"/>
<text x="15" y="990" style="fill:#a0a0a0">1</text><text x="88" y="990" style="fill:#a0a0a0">1</text>
<rect x="155.500" y="977" width="1224.500" height="18" fill="#3a3a3a"/>
<rect x="162" y="979" width="733" height="14" fill="#5f5f5f"/>
<rect x="165" y="980.500" width="10.500" height="11" rx="1.500" fill="#9a9a9a"/><rect x="882" y="980.500" width="10.500" height="11" rx="1.500" fill="#9a9a9a"/>
<text x="179.500" y="990" style="fill:#b8b8b8">1</text><text x="866" y="990" style="fill:#b8b8b8">120</text>
<rect x="1386" y="977" width="67" height="18" fill="#2e2e2e"/><rect x="1459" y="977" width="67" height="18" fill="#2e2e2e"/>
<text x="1391" y="990" style="fill:#acacac">120</text><text x="1464" y="990" style="fill:#acacac">200</text>
<use href="#bar" x="1530" y="986"/>
<path d="M1542 984H1549L1545.500 988Z" fill="#777"/>
<rect x="1555" y="978" width="76" height="17" fill="#3e3e3e"/><text x="1560" y="990" style="fill:#a0a0a0">No Character Set</text>
<path d="M1640 984H1647L1643.500 988Z" fill="#777"/>
<rect x="1653" y="978" width="76" height="17" fill="#3e3e3e"/><text x="1658" y="990" style="fill:#a0a0a0">No Anim Layer</text>
<use href="#bar" x="1738" y="986"/>
<rect x="1748" y="979" width="62" height="14" fill="#5c5c5c"/><rect x="1794" y="979" width="16" height="14" fill="#555"/>
<text x="1751" y="990" style="fill:#a0a0a0">24 fps</text><path d="M1799 984H1806L1802.500 988Z" fill="#ccc"/>
<path d="M1822 984H1831A2.500 2.500 0 0 1 1831 989H1823A2.500 2.500 0 0 1 1823 984" fill="none" stroke="#ddd" stroke-width="1.300"/><path d="M1827 981.500L1830 984L1827 986.500Z" fill="#ddd"/>
<rect x="1840" y="977" width="18" height="18" fill="#5285a6" stroke="#2fa85a"/><circle cx="1848" cy="986" r="4.500" fill="#e4dc2c"/><rect x="1847" y="983" width="2" height="6" fill="#333"/>
<use href="#bar" x="1866" y="986"/>
<circle cx="1882" cy="986" r="5.500" fill="none" stroke="#bbb" stroke-dasharray="5 1.500"/><path d="M1882 982.500V987" stroke="#e07b28" stroke-width="1.700"/><circle cx="1882" cy="989" r=".9" fill="#e07b28"/>
<circle cx="1900" cy="980.500" r="2" fill="none" stroke="#ccc"/><path d="M1906 978.500L1903 984L1906 987L1903 993M1906 987L1909 991M1903 984L1909 984" fill="none" stroke="#e07b28" stroke-width="1.500"/>

<!-- MEL -->
<rect x="0" y="1000" width="1920" height="2" fill="#3d3d3d"/>
<text x="18" y="1016" style="fill:#b4b4b4">MEL</text>
<rect x="44.500" y="1004" width="922" height="17" fill="#2e2e2e"/>
<rect x="973.500" y="1004" width="921.500" height="17" fill="#2e2e2e"/>
<path d="M970 1008v2M970 1012v2" stroke="#888"/>
<rect x="1900" y="1007" width="13" height="13" fill="#cfcfcf"/><rect x="1900" y="1004.500" width="13" height="2" fill="#aaa"/><path d="M1904 1010V1017M1909 1010V1017" stroke="#555" stroke-width="1.400"/>
</svg>
</body></html>
